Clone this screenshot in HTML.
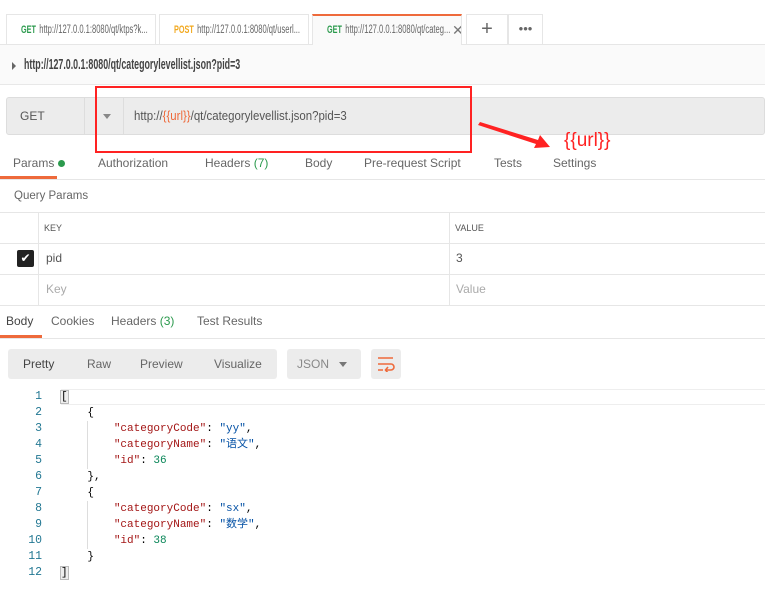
<!DOCTYPE html>
<html><head><meta charset="utf-8"><style>
*{margin:0;padding:0;box-sizing:border-box}
body{width:765px;height:606px;overflow:hidden;background:#fff;font-family:"Liberation Sans","Noto Sans CJK SC",sans-serif;position:relative;color:#505050}
.a{position:absolute;white-space:nowrap}
.tab{position:absolute;top:14px;height:30px;border:1px solid #e6e6e6;border-bottom:none;background:#fff;font-size:11.5px;line-height:30px;color:#666;overflow:hidden}
.tt{position:absolute;left:14px;top:0;transform:scaleX(0.66);transform-origin:0 50%;white-space:nowrap}
.m{font-size:11px;font-weight:bold;margin-right:5px}
.t{font-size:12px;color:#666}
.code{font-family:"Liberation Mono","Noto Sans CJK SC",monospace;font-size:11.5px;position:absolute;line-height:16px}
.k{color:#a31515}.s{color:#0451a5}.n{color:#098658}
</style></head><body>
<div class="a" style="left:0;top:44px;width:765px;height:41px;background:#fafafa;border-top:1px solid #e6e6e6;border-bottom:1px solid #e8e8e8"></div>
<div class="tab" style="left:6px;width:150px"><div class="tt"><span class="m" style="color:#2b9a4d">GET</span>http://127.0.0.1:8080/qt/ktps?k...</div></div>
<div class="tab" style="left:159px;width:150px"><div class="tt"><span class="m" style="color:#f2a81d">POST</span>http://127.0.0.1:8080/qt/userl...</div></div>
<div class="tab" style="left:312px;width:150px;height:31px;border-top:2px solid #ee6a3b;background:#fafafa;line-height:29px"><div class="tt"><span class="m" style="color:#2b9a4d">GET</span>http://127.0.0.1:8080/qt/categ...</div><span style="position:absolute;left:139px;top:0;font-size:14px;color:#777">✕</span></div>
<div class="tab" style="left:466px;width:42px;font-size:20px;color:#666;text-align:center;line-height:28px">+</div>
<div class="tab" style="left:508px;width:35px;font-size:13px;color:#666;text-align:center;line-height:28px">•••</div>
<div class="a" style="left:12px;top:62px;width:0;height:0;border-left:4px solid #666;border-top:4px solid transparent;border-bottom:4px solid transparent"></div>
<div class="a" style="left:24px;top:56px;font-size:15px;font-weight:bold;color:#444;transform:scaleX(0.59);transform-origin:0 50%">http://127.0.0.1:8080/qt/categorylevellist.json?pid=3</div>
<div class="a" style="left:6px;top:97px;width:759px;height:38px;background:#ececec;border:1px solid #ddd;border-radius:3px"></div>
<div class="a" style="left:84px;top:98px;width:1px;height:36px;background:#ddd"></div>
<div class="a" style="left:123px;top:98px;width:1px;height:36px;background:#ddd"></div>
<div class="a" style="left:20px;top:109px;font-size:12px;color:#555">GET</div>
<div class="a" style="left:103px;top:114px;width:0;height:0;border-top:5px solid #888;border-left:4px solid transparent;border-right:4px solid transparent"></div>
<div class="a" style="left:134px;top:108px;font-size:13px;color:#555;transform:scaleX(0.88);transform-origin:0 50%">http://<span style="color:#ee6a3b">{{url}}</span>/qt/categorylevellist.json?pid=3</div>
<div class="a" style="left:95px;top:86px;width:377px;height:67px;border:2px solid #f22"></div>
<svg class="a" style="left:476px;top:118px" width="80" height="34"><polygon points="4,4 62,22 64,17 74,29 58,30 60,26 2,7" fill="#f22"/></svg>
<div class="a" style="left:564px;top:130px;font-size:19px;color:#f22">{{url}}</div>
<div class="a" style="left:0;top:179px;width:765px;height:1px;background:#e6e6e6"></div>
<div class="a t" style="left:13px;top:156px">Params <span style="display:inline-block;width:7px;height:7px;border-radius:50%;background:#2b9a4d"></span></div>
<div class="a" style="left:0;top:176px;width:57px;height:3px;background:#ee6a3b"></div>
<div class="a t" style="left:98px;top:156px">Authorization</div>
<div class="a t" style="left:205px;top:156px">Headers <span style="color:#2b9a4d">(7)</span></div>
<div class="a t" style="left:305px;top:156px">Body</div>
<div class="a t" style="left:364px;top:156px">Pre-request Script</div>
<div class="a t" style="left:494px;top:156px">Tests</div>
<div class="a t" style="left:553px;top:156px">Settings</div>
<div class="a" style="left:14px;top:190px;font-size:11.5px;color:#666">Query Params</div>
<div class="a" style="left:0;top:212px;width:765px;height:1px;background:#e6e6e6"></div>
<div class="a" style="left:0;top:243px;width:765px;height:1px;background:#e6e6e6"></div>
<div class="a" style="left:0;top:274px;width:765px;height:1px;background:#e6e6e6"></div>
<div class="a" style="left:0;top:305px;width:765px;height:1px;background:#e6e6e6"></div>
<div class="a" style="left:38px;top:212px;width:1px;height:93px;background:#e6e6e6"></div>
<div class="a" style="left:449px;top:212px;width:1px;height:93px;background:#e6e6e6"></div>
<div class="a" style="left:44px;top:223px;font-size:9px;color:#555">KEY</div>
<div class="a" style="left:455px;top:223px;font-size:9px;color:#555">VALUE</div>
<div class="a" style="left:17px;top:250px;width:17px;height:17px;background:#222;border-radius:2px;color:#fff;font-size:12px;text-align:center;line-height:17px">✔</div>
<div class="a t" style="left:46px;top:251px;color:#555">pid</div>
<div class="a t" style="left:456px;top:251px;color:#555">3</div>
<div class="a t" style="left:46px;top:282px;color:#aaa">Key</div>
<div class="a t" style="left:456px;top:282px;color:#aaa">Value</div>
<div class="a" style="left:0;top:338px;width:765px;height:1px;background:#e6e6e6"></div>
<div class="a t" style="left:6px;top:314px;color:#444">Body</div>
<div class="a" style="left:0;top:335px;width:42px;height:3px;background:#ee6a3b"></div>
<div class="a t" style="left:51px;top:314px">Cookies</div>
<div class="a t" style="left:111px;top:314px">Headers <span style="color:#2b9a4d">(3)</span></div>
<div class="a t" style="left:197px;top:314px">Test Results</div>
<div class="a" style="left:8px;top:349px;width:269px;height:30px;background:#ececec;border-radius:3px"></div>
<div class="a t" style="left:23px;top:357px;color:#444">Pretty</div>
<div class="a t" style="left:87px;top:357px">Raw</div>
<div class="a t" style="left:140px;top:357px">Preview</div>
<div class="a t" style="left:214px;top:357px">Visualize</div>
<div class="a" style="left:287px;top:349px;width:74px;height:30px;background:#ececec;border-radius:3px"></div>
<div class="a t" style="left:297px;top:357px;color:#888">JSON</div>
<div class="a" style="left:339px;top:362px;width:0;height:0;border-top:5px solid #777;border-left:4px solid transparent;border-right:4px solid transparent"></div>
<div class="a" style="left:371px;top:349px;width:30px;height:30px;background:#ececec;border-radius:3px"></div>
<svg class="a" style="left:377px;top:356px" width="18" height="16"><path d="M1 2H16M1 8H14a3 3 0 0 1 0 6H9M1 14H6M11 11L8.5 14L11 17" fill="none" stroke="#ee6a3b" stroke-width="1.6"/></svg>
<div class="a" style="left:61px;top:389px;width:704px;height:16px;border-top:1px solid #eee;border-bottom:1px solid #eee"></div>
<div class="code" style="left:14px;top:389px;width:28px;text-align:right;color:#237893">1<br>2<br>3<br>4<br>5<br>6<br>7<br>8<br>9<br>10<br>11<br>12</div>
<div class="a" style="left:87px;top:421px;width:1px;height:48px;background:#ddd"></div>
<div class="a" style="left:87px;top:501px;width:1px;height:48px;background:#ddd"></div>
<pre class="code" style="left:61px;top:389px;color:#000;font-size:11px"><span style="background:#eee;outline:1px solid #bbb">[</span>
    {
        <span class="k">"categoryCode"</span>: <span class="s">"yy"</span>,
        <span class="k">"categoryName"</span>: <span class="s">"语文"</span>,
        <span class="k">"id"</span>: <span class="n">36</span>
    },
    {
        <span class="k">"categoryCode"</span>: <span class="s">"sx"</span>,
        <span class="k">"categoryName"</span>: <span class="s">"数学"</span>,
        <span class="k">"id"</span>: <span class="n">38</span>
    }
<span style="background:#eee;outline:1px solid #bbb">]</span></pre>
</body></html>
